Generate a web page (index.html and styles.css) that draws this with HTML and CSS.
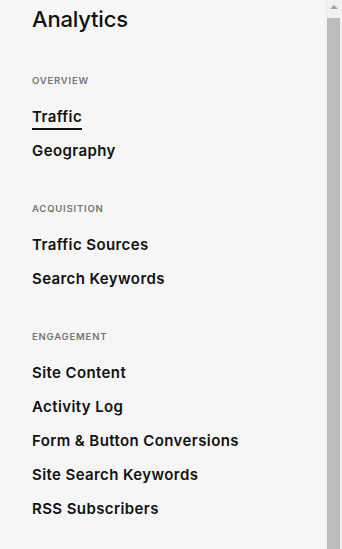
FILE: index.html
```html
<!DOCTYPE html>
<html lang="en">
<head>
    <meta charset="UTF-8">
    <meta name="viewport" content="width=device-width, initial-scale=1.0">
    <title>Analytics</title>
    <link rel="stylesheet" href="styles.css">
</head>
<body>

    <div id="frame">
        <div id="panel">
            <h1 class="title">Analytics</h1>

            <!-- Overview -->
            <div class="section first">
                <div class="label">Overview</div>
                <a class="item active" href="#"><span>Traffic</span></a>
                <a class="item" href="#"><span>Geography</span></a>
            </div>

            <!-- Acquisition -->
            <div class="section">
                <div class="label">Acquisition</div>
                <a class="item" href="#"><span>Traffic Sources</span></a>
                <a class="item" href="#"><span>Search Keywords</span></a>
            </div>

            <!-- Engagement -->
            <div class="section">
                <div class="label">Engagement</div>
                <a class="item" href="#"><span>Site Content</span></a>
                <a class="item" href="#"><span>Activity Log</span></a>
                <a class="item" href="#"><span>Form &amp; Button Conversions</span></a>
                <a class="item" href="#"><span>Site Search Keywords</span></a>
                <a class="item" href="#"><span>RSS Subscribers</span></a>
            </div>
        </div>

        <!-- Scrollbar -->
        <div id="scrollbar">
            <div class="arrow"></div>
            <div class="thumb"></div>
        </div>
    </div>

</body>
</html>
```

FILE: styles.css
```css
* {
    margin: 0;
    padding: 0;
    box-sizing: border-box;
}

body {
    background-color: #f6f6f6;
    font-family: Inter, "Liberation Sans", sans-serif;
    color: #111;
    overflow: hidden;
}

#frame {
    display: flex;
    height: 100vh;
}

#panel {
    flex: 1;
    padding: 5px 0 0 32px;
}

.title {
    font-size: 22px;
    font-weight: 500;
    line-height: 28px;
    letter-spacing: -0.2px;
}

.section {
    margin-top: 34px;
}

.section.first {
    margin-top: 41px;
}

.label {
    height: 14px;
    line-height: 14px;
    margin-bottom: 12px;
    font-size: 9.5px;
    font-weight: 600;
    letter-spacing: 0.8px;
    text-transform: uppercase;
    color: #757575;
}

.item {
    display: flex;
    align-items: center;
    height: 34px;
    font-size: 15px;
    font-weight: 600;
    letter-spacing: 0.4px;
    color: #111;
    text-decoration: none;
}

.item span {
    line-height: 18px;
}

.item.active span {
    margin-top: 4px;
    padding-bottom: 2px;
    border-bottom: 2px solid #111;
}

#scrollbar {
    display: flex;
    flex-direction: column;
    width: 17px;
    background-color: #f1f1f1;
}

.arrow {
    height: 17px;
    display: flex;
    justify-content: center;
    align-items: center;
}

.arrow::before {
    content: "";
    border-left: 4px solid transparent;
    border-right: 4px solid transparent;
    border-bottom: 4px solid #a3a3a3;
    margin-top: -3px;
}

.thumb {
    flex: 1;
    margin: 1px 2px 0 2px;
    background-color: #bdbdbd;
}
```
